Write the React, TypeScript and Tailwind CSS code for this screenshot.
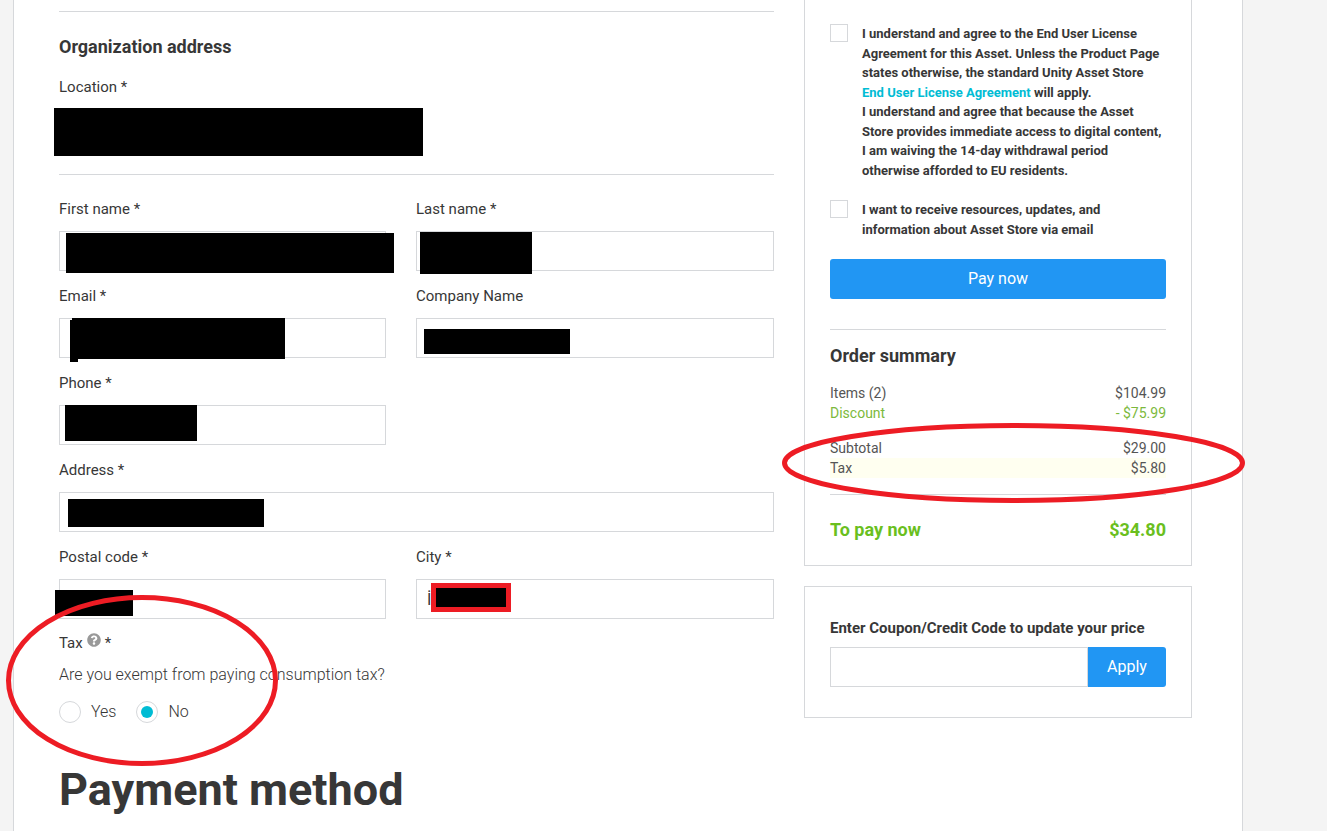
import type { InputHTMLAttributes, ReactNode } from "react"
import { FaQuestionCircle } from "react-icons/fa"

interface FieldProps extends InputHTMLAttributes<HTMLInputElement> {
  id: string
  label: string
  wide?: boolean
  children?: ReactNode
}

function Field({ id, label, wide, children, ...props }: FieldProps) {
  return (
    <div className={wide ? "col-span-2" : "col-span-1"}>
      <label htmlFor={id} className="block text-[15px] leading-5">
        {label}
      </label>
      <div className="relative mt-3">
        <input
          id={id}
          type="text"
          className="block h-10 w-full border border-[#d6d8db] bg-white px-2.5 text-base outline-none"
          {...props}
        />
        {children}
      </div>
    </div>
  )
}

function Mask({ className }: { className: string }) {
  return <div aria-hidden="true" className={`absolute bg-black ${className}`} />
}

function CheckRow({ id, children }: { id: string; children: ReactNode }) {
  return (
    <div className="flex items-start gap-3.5">
      <input
        id={id}
        type="checkbox"
        className="size-[18px] shrink-0 appearance-none border border-[#d6d8db] bg-white checked:bg-[#00bcd4]"
      />
      <label htmlFor={id} className="text-[13px] leading-normal font-bold">
        {children}
      </label>
    </div>
  )
}

function TaxRadio({ id, label, checked }: { id: string; label: string; checked?: boolean }) {
  return (
    <div className="flex items-center gap-2.5">
      <input
        id={id}
        type="radio"
        name="tax-exempt"
        defaultChecked={checked}
        className="grid size-[22px] appearance-none place-items-center rounded-full border border-[#d6d8db] bg-white before:size-3 before:rounded-full checked:before:bg-[#00bcd4]"
      />
      <label htmlFor={id} className="text-base leading-[22px] font-light">
        {label}
      </label>
    </div>
  )
}

function SummaryRow({ label, value, className = "" }: { label: string; value: string; className?: string }) {
  return (
    <div className={`flex justify-between text-sm leading-5 ${className}`}>
      <dt>{label}</dt>
      <dd>{value}</dd>
    </div>
  )
}

function BillingForm() {
  return (
    <form className="min-w-0 flex-1 pt-[11px]">
      <hr className="border-[#d6d8db]" />
      <h2 className="mt-[23px] text-lg leading-6 font-bold">Organization address</h2>

      <div className="mt-4">
        <label htmlFor="location" className="block text-[15px] leading-6">
          Location *
        </label>
        <div className="relative mt-[13px]">
          <input id="location" type="text" className="block h-10 w-[360px] border border-[#d6d8db]" />
          <Mask className="-top-1 -left-[5px] h-12 w-[369px]" />
        </div>
      </div>

      <hr className="mt-[22px] border-[#d6d8db]" />

      <div className="mt-6 grid grid-cols-[327fr_358fr] gap-x-[30px] gap-y-[15px]">
        <Field id="first-name" label="First name *">
          <Mask className="top-0.5 left-[7px] h-10 w-[328px]" />
        </Field>
        <Field id="last-name" label="Last name *">
          <Mask className="top-px left-1 h-[42px] w-28" />
        </Field>
        <Field id="email" label="Email *">
          <Mask className="top-0 left-[13px] h-[41px] w-[213px]" />
          <Mask className="top-0.5 left-[11px] h-[42px] w-2" />
        </Field>
        <Field id="company" label="Company Name">
          <Mask className="top-[11px] left-2 h-[25px] w-[146px]" />
        </Field>
        <Field id="phone" label="Phone *">
          <Mask className="top-0 left-1.5 h-9 w-[132px]" />
        </Field>
        <Field id="address" label="Address *" wide>
          <Mask className="top-[7px] left-[9px] h-7 w-[196px]" />
        </Field>
        <Field id="postal-code" label="Postal code *">
          <Mask className="top-[11px] -left-1 h-[26px] w-[78px]" />
        </Field>
        <Field id="city" label="City *" defaultValue="İ">
          <Mask className="top-1 left-[15px] h-[29px] w-20 border-5 border-[#ed1c24]" />
        </Field>
      </div>

      <div className="relative mt-3.5">
        <fieldset>
          <legend className="flex gap-1 text-[15px] leading-5">
            Tax
            <FaQuestionCircle className="size-3.5 text-[#999]" />
            *
          </legend>
          <p className="mt-2.5 text-base leading-6 font-light">Are you exempt from paying consumption tax?</p>
          <div className="mt-3.5 flex gap-5">
            <TaxRadio id="tax-yes" label="Yes" />
            <TaxRadio id="tax-no" label="No" checked />
          </div>
        </fieldset>
        <svg
          aria-hidden="true"
          className="pointer-events-none absolute -top-[38px] -left-[53px] z-10 h-[171px] w-[272px]"
          viewBox="0 0 272 171"
          fill="none"
        >
          <ellipse cx="136" cy="85.5" rx="133.5" ry="83" stroke="#ed1c24" strokeWidth="5" />
        </svg>
      </div>

      <h1 className="mt-10 text-[45px] leading-[54px] font-bold">Payment method</h1>
    </form>
  )
}

function Sidebar() {
  return (
    <aside className="w-[388px] shrink-0">
      <section className="border border-t-0 border-[#d6d8db] px-[25px] pt-6 pb-[23px]">
        <CheckRow id="agree">
          I understand and agree to the End User License Agreement for this Asset. Unless the Product Page states
          otherwise, the standard Unity Asset Store{" "}
          <a href="#eula" className="text-[#00bcd4]">
            End User License Agreement
          </a>{" "}
          will apply.
          <br />I understand and agree that because the Asset Store provides immediate access to digital content, I am
          waiving the 14-day withdrawal period otherwise afforded to EU residents.
        </CheckRow>
        <div className="mt-5">
          <CheckRow id="updates">I want to receive resources, updates, and information about Asset Store via email</CheckRow>
        </div>
        <button type="button" className="mt-5 h-10 w-full rounded-[3px] bg-[#2196f3] text-base text-white">
          Pay now
        </button>

        <hr className="mt-[30px] border-[#d6d8db]" />
        <h2 className="mt-3.5 text-lg leading-6 font-bold">Order summary</h2>

        <dl className="mt-[15px] text-[#555]">
          <SummaryRow label="Items (2)" value="$104.99" />
          <SummaryRow label="Discount" value="- $75.99" className="text-[#7cb93c]" />
          <div className="relative mt-[15px]">
            <SummaryRow label="Subtotal" value="$29.00" />
            <SummaryRow label="Tax" value="$5.80" className="bg-[#fffff0]" />
            <svg
              aria-hidden="true"
              className="pointer-events-none absolute -top-[15px] -left-12 z-10 h-20 w-[463px]"
              viewBox="0 0 463 80"
              fill="none"
            >
              <ellipse cx="231.5" cy="40" rx="229" ry="37.5" stroke="#ed1c24" strokeWidth="5" />
            </svg>
          </div>
          <div className="mt-4 flex justify-between border-t border-[#d6d8db] pt-[23px] text-lg leading-6 font-bold text-[#6abf1e]">
            <dt>To pay now</dt>
            <dd>$34.80</dd>
          </div>
        </dl>
      </section>

      <section className="mt-5 border border-[#d6d8db] px-[25px] pt-[29px] pb-[30px]">
        <label htmlFor="coupon" className="block text-[15px] leading-6 font-bold">
          Enter Coupon/Credit Code to update your price
        </label>
        <div className="mt-[7px] flex">
          <input
            id="coupon"
            type="text"
            className="h-10 min-w-0 flex-1 border border-[#d6d8db] bg-white px-2.5 text-base outline-none"
          />
          <button type="button" className="h-10 w-[78px] rounded-r-[3px] bg-[#2196f3] text-base text-white">
            Apply
          </button>
        </div>
      </section>
    </aside>
  )
}

export default function App() {
  return (
    <div className="min-h-screen bg-[#f4f4f4] pr-[84px] pl-[13px] font-[Roboto,sans-serif] text-[#373737]">
      <main className="flex min-h-screen items-start gap-[30px] border-x border-[#d6d8db] bg-white pr-[50px] pl-[45px]">
        <BillingForm />
        <Sidebar />
      </main>
    </div>
  )
}
